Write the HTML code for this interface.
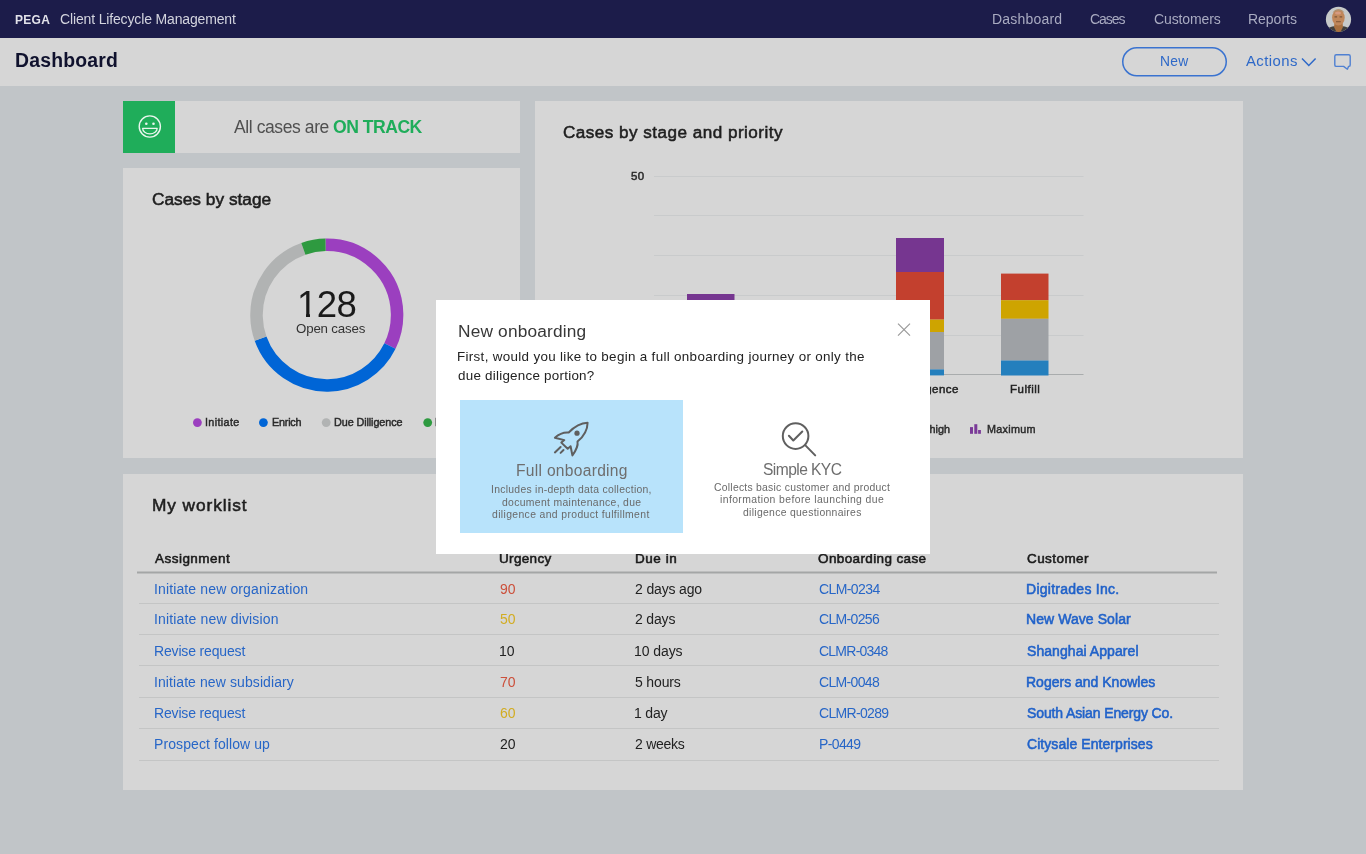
<!DOCTYPE html>
<html><head><meta charset="utf-8">
<style>
*{margin:0;padding:0;box-sizing:border-box}
html,body{width:1366px;height:854px;overflow:hidden;background:#c1c5c8;font-family:"Liberation Sans",sans-serif;position:relative}
.t{position:absolute;white-space:nowrap;will-change:transform}
.b{position:absolute}
svg{position:absolute;left:0;top:0}
</style></head><body>
<div class="b" style="left:0;top:0;width:1366px;height:38px;background:#1c1c4a"></div>
<div class="b" style="left:0;top:38px;width:1366px;height:48px;background:#d6d6d6"></div>
<div class="b" style="left:123px;top:101px;width:397px;height:52px;background:#d6d6d6"></div>
<div class="b" style="left:123px;top:101px;width:52px;height:52px;background:#1fad5a"></div>
<div class="b" style="left:123px;top:168px;width:397px;height:290px;background:#d6d6d6"></div>
<div class="b" style="left:535px;top:101px;width:708px;height:357px;background:#d6d6d6"></div>
<div class="b" style="left:123px;top:474px;width:1120px;height:316px;background:#d6d6d6"></div>

<svg width="1366" height="854" viewBox="0 0 1366 854">
  <!-- avatar -->
  <defs><clipPath id="av"><circle cx="1338.5" cy="19.4" r="12.6"/></clipPath></defs>
  <circle cx="1338.5" cy="19.4" r="12.6" fill="#c6c9c9"/>
  <g clip-path="url(#av)">
    <path d="M1326,34 L1328,28 Q1333,25.5 1338.5,26 Q1344,25.5 1349,28 L1351,34 Z" fill="#3f3f3d"/>
    <path d="M1334.5,23 L1342.5,23 L1343,27 L1340,33 L1337,33 L1334,27 Z" fill="#a8703f"/>
    <ellipse cx="1338.4" cy="17.6" rx="6.3" ry="8" fill="#c0875a"/>
    <ellipse cx="1338" cy="13" rx="3" ry="1.6" fill="#d59a80"/>
    <path d="M1332.5,13 Q1338.5,8.5 1344.5,13 Q1343,9.6 1338.5,9.3 Q1334,9.6 1332.5,13 Z" fill="#b09070"/>
    <rect x="1334.5" y="16.4" width="2.6" height="1" fill="#6a4a30"/>
    <rect x="1339.6" y="16.4" width="2.6" height="1" fill="#6a4a30"/>
    <rect x="1336" y="21.3" width="4.8" height="0.9" fill="#7a5030"/>
  </g>
  <!-- button New -->
  <rect x="1122.75" y="47.75" width="103.5" height="28" rx="14" ry="14" fill="none" stroke="#3a73d0" stroke-width="1.5"/>
  <!-- chevron -->
  <polyline points="1302,58.4 1308.8,65.4 1315.6,58.4" fill="none" stroke="#2d68c8" stroke-width="1.5"/>
  <!-- chat -->
  <path d="M1336.3,54.8 H1348.7 Q1350.2,54.8 1350.2,56.3 V64.9 Q1350.2,66.4 1348.7,66.4 H1348.5 L1347.4,69.2 L1343.6,66.4 H1336.3 Q1334.8,66.4 1334.8,64.9 V56.3 Q1334.8,54.8 1336.3,54.8 Z" fill="none" stroke="#4f80d2" stroke-width="1.4" stroke-linejoin="round"/>
  <!-- smiley -->
  <circle cx="149.8" cy="126.5" r="10.6" fill="none" stroke="#eaf6ee" stroke-width="1.4"/>
  <circle cx="146.3" cy="123.7" r="1.3" fill="#eaf6ee"/>
  <circle cx="153.5" cy="123.7" r="1.3" fill="#eaf6ee"/>
  <path d="M142.6,128.3 H157.2 A7.3,5.6 0 0 1 142.6,128.3 Z" fill="none" stroke="#eaf6ee" stroke-width="1.3" stroke-linejoin="round"/>
  <!-- donut -->
  <g transform="rotate(-91 326.8 315.1)" fill="none" stroke-width="12.5">
    <circle cx="326.8" cy="315.1" r="70.3" stroke="#9b3fbf" stroke-dasharray="143.5 500" stroke-dashoffset="0"/>
    <circle cx="326.8" cy="315.1" r="70.3" stroke="#0065d6" stroke-dasharray="164.4 500" stroke-dashoffset="-143.5"/>
    <circle cx="326.8" cy="315.1" r="70.3" stroke="#b1b3b3" stroke-dasharray="110.4 500" stroke-dashoffset="-307.9"/>
    <circle cx="326.8" cy="315.1" r="70.3" stroke="#2e9a40" stroke-dasharray="23.4 500" stroke-dashoffset="-418.3"/>
  </g>
  <!-- legend dots -->
  <circle cx="197.4" cy="422.6" r="4.4" fill="#9b3fbf"/>
  <circle cx="263.4" cy="422.6" r="4.4" fill="#0065d6"/>
  <circle cx="326.2" cy="422.6" r="4.4" fill="#b1b3b3"/>
  <circle cx="427.7" cy="422.6" r="4.4" fill="#2e9a40"/>
  <!-- grid -->
  <g fill="#c9cbcc">
    <rect x="654" y="176" width="429.5" height="1"/>
    <rect x="654" y="215" width="429.5" height="1"/>
    <rect x="654" y="255" width="429.5" height="1"/>
    <rect x="654" y="295" width="429.5" height="1"/>
    <rect x="654" y="335" width="429.5" height="1"/>
  </g>
  <rect x="654" y="374" width="429.5" height="1" fill="#a9acad"/>
  <!-- bars -->
  <rect x="687" y="294" width="47.5" height="81" fill="#763690"/>
  <rect x="896" y="238" width="48" height="34" fill="#763690"/>
  <rect x="896" y="272" width="48" height="47.6" fill="#c3402e"/>
  <rect x="896" y="319.6" width="48" height="12.4" fill="#cea400"/>
  <rect x="896" y="332" width="48" height="37.4" fill="#9ea1a5"/>
  <rect x="896" y="369.4" width="48" height="6" fill="#247fbd"/>
  <rect x="1001" y="273.6" width="47.5" height="26.6" fill="#c3402e"/>
  <rect x="1001" y="300.2" width="47.5" height="18.6" fill="#cea400"/>
  <rect x="1001" y="318.8" width="47.5" height="41.7" fill="#9ea1a5"/>
  <rect x="1001" y="360.5" width="47.5" height="15" fill="#247fbd"/>
  <!-- legend icon maximum -->
  <rect x="970" y="427.1" width="3" height="6.7" fill="#7a3a98"/>
  <rect x="974.3" y="424.2" width="3" height="9.6" fill="#7a3a98"/>
  <rect x="978.1" y="430" width="2.8" height="3.8" fill="#7a3a98"/>
  <!-- table lines -->
  <rect x="137" y="571.5" width="1080" height="2" fill="#a4a6a6"/>
  <g fill="#c4c5c5">
    <rect x="139" y="603" width="1080" height="1"/>
    <rect x="139" y="634" width="1080" height="1"/>
    <rect x="139" y="665" width="1080" height="1"/>
    <rect x="139" y="697" width="1080" height="1"/>
    <rect x="139" y="728" width="1080" height="1"/>
    <rect x="139" y="760" width="1080" height="1"/>
  </g>
</svg>
<div class="t" style="left:14.60px;top:14.00px;font-size:12px;line-height:12px;color:#e2e2ea;font-weight:bold;letter-spacing:0.286px;">PEGA</div>
<div class="t" style="left:59.80px;top:12.00px;font-size:14px;line-height:14px;color:#d3d4de;letter-spacing:-0.149px;">Client Lifecycle Management</div>
<div class="t" style="left:991.70px;top:12.00px;font-size:14px;line-height:14px;color:#a9abc1;letter-spacing:0.200px;">Dashboard</div>
<div class="t" style="left:1089.60px;top:12.00px;font-size:14px;line-height:14px;color:#a9abc1;letter-spacing:-1.021px;">Cases</div>
<div class="t" style="left:1153.80px;top:12.00px;font-size:14px;line-height:14px;color:#a9abc1;letter-spacing:-0.110px;">Customers</div>
<div class="t" style="left:1248.40px;top:12.00px;font-size:14px;line-height:14px;color:#a9abc1;letter-spacing:-0.020px;">Reports</div>
<div class="t" style="left:15.10px;top:51.00px;font-size:19.4px;line-height:19.4px;color:#10122e;font-weight:bold;letter-spacing:0.196px;">Dashboard</div>
<div class="t" style="left:1160.00px;top:55.00px;font-size:13.8px;line-height:13.8px;color:#2d68c8;letter-spacing:0.332px;">New</div>
<div class="t" style="left:1245.90px;top:54.00px;font-size:14.9px;line-height:14.9px;color:#2d68c8;letter-spacing:0.419px;">Actions</div>
<div class="t" style="left:234.20px;top:119.00px;font-size:17.5px;line-height:17.5px;color:#505050;letter-spacing:-0.404px;">All cases are</div>
<div class="t" style="left:333.20px;top:119.00px;font-size:17.6px;line-height:17.6px;color:#1fad5a;font-weight:bold;letter-spacing:-0.506px;">ON TRACK</div>
<div class="t" style="left:151.50px;top:191.00px;font-size:17.3px;line-height:17.3px;color:#1e1e1e;-webkit-text-stroke:0.55px #1e1e1e;letter-spacing:0.008px;">Cases by stage</div>
<div class="t" style="left:563.40px;top:124.00px;font-size:17.1px;line-height:17.1px;color:#1e1e1e;-webkit-text-stroke:0.55px #1e1e1e;letter-spacing:0.478px;">Cases by stage and priority</div>
<div class="t" style="left:152.25px;top:497.00px;font-size:17.3px;line-height:17.3px;color:#1e1e1e;-webkit-text-stroke:0.55px #1e1e1e;letter-spacing:0.911px;">My worklist</div>
<div class="t" style="left:296.90px;top:287.00px;font-size:36.6px;line-height:36.6px;color:#1a1a1a;letter-spacing:-0.543px;">128</div>
<div class="t" style="left:296.20px;top:322.00px;font-size:13.3px;line-height:13.3px;color:#333333;letter-spacing:-0.179px;">Open cases</div>
<div class="t" style="left:204.60px;top:417.00px;font-size:10.8px;line-height:10.8px;color:#2a2a2a;-webkit-text-stroke:0.45px #2a2a2a;letter-spacing:0.356px;">Initiate</div>
<div class="t" style="left:271.60px;top:417.00px;font-size:10.8px;line-height:10.8px;color:#2a2a2a;-webkit-text-stroke:0.45px #2a2a2a;letter-spacing:-0.220px;">Enrich</div>
<div class="t" style="left:334.00px;top:417.00px;font-size:10.8px;line-height:10.8px;color:#2a2a2a;-webkit-text-stroke:0.45px #2a2a2a;letter-spacing:-0.085px;">Due Dilligence</div>
<div class="t" style="left:434.60px;top:417.00px;font-size:10.8px;line-height:10.8px;color:#2a2a2a;-webkit-text-stroke:0.45px #2a2a2a;">Fulfill</div>
<div class="t" style="left:630.90px;top:171.00px;font-size:11.5px;line-height:11.5px;color:#2a2a2a;-webkit-text-stroke:0.48px #2a2a2a;letter-spacing:0.404px;">50</div>
<div class="t" style="left:1010.10px;top:384.00px;font-size:11.5px;line-height:11.5px;color:#222222;-webkit-text-stroke:0.48px #222222;letter-spacing:0.503px;">Fulfill</div>
<div class="t" style="left:881.00px;top:384.00px;font-size:11.5px;line-height:11.5px;color:#222222;-webkit-text-stroke:0.48px #222222;letter-spacing:0.483px;">Due Diligence</div>
<div class="t" style="left:986.70px;top:424.00px;font-size:10.8px;line-height:10.8px;color:#2a2a2a;-webkit-text-stroke:0.45px #2a2a2a;letter-spacing:0.301px;">Maximum</div>
<div class="t" style="left:904.90px;top:424.00px;font-size:10.8px;line-height:10.8px;color:#2a2a2a;-webkit-text-stroke:0.45px #2a2a2a;">Very high</div>
<div class="t" style="left:458.00px;top:323.00px;font-size:17.3px;line-height:17.3px;color:#383838;letter-spacing:0.181px;z-index:10;">New onboarding</div>
<div class="t" style="left:457.40px;top:350.00px;font-size:13.4px;line-height:13.4px;color:#222222;letter-spacing:0.326px;z-index:10;">First, would you like to begin a full onboarding journey or only the</div>
<div class="t" style="left:458.40px;top:369.00px;font-size:13.4px;line-height:13.4px;color:#222222;letter-spacing:0.248px;z-index:10;">due diligence portion?</div>
<div class="t" style="left:515.60px;top:463.00px;font-size:15.6px;line-height:15.6px;color:#6e6e6e;letter-spacing:0.284px;z-index:10;">Full onboarding</div>
<div class="t" style="left:491.40px;top:485.00px;font-size:10.4px;line-height:10.4px;color:#6a6a6a;letter-spacing:0.277px;z-index:10;">Includes in-depth data collection,</div>
<div class="t" style="left:501.70px;top:498.00px;font-size:10.4px;line-height:10.4px;color:#6a6a6a;letter-spacing:0.331px;z-index:10;">document maintenance, due</div>
<div class="t" style="left:492.40px;top:510.00px;font-size:10.4px;line-height:10.4px;color:#6a6a6a;letter-spacing:0.367px;z-index:10;">diligence and product fulfillment</div>
<div class="t" style="left:762.60px;top:462.00px;font-size:15.6px;line-height:15.6px;color:#6e6e6e;letter-spacing:-0.567px;z-index:10;">Simple KYC</div>
<div class="t" style="left:713.90px;top:483.00px;font-size:10.4px;line-height:10.4px;color:#6a6a6a;letter-spacing:0.247px;z-index:10;">Collects basic customer and product</div>
<div class="t" style="left:719.80px;top:495.00px;font-size:10.4px;line-height:10.4px;color:#6a6a6a;letter-spacing:0.398px;z-index:10;">information before launching due</div>
<div class="t" style="left:742.80px;top:508.00px;font-size:10.4px;line-height:10.4px;color:#6a6a6a;letter-spacing:0.300px;z-index:10;">diligence questionnaires</div>
<div class="t" style="left:154.60px;top:552.00px;font-size:13.5px;line-height:13.5px;color:#1a1a1a;-webkit-text-stroke:0.55px #1a1a1a;letter-spacing:0.469px;">Assignment</div>
<div class="t" style="left:499.00px;top:552.00px;font-size:13.5px;line-height:13.5px;color:#1a1a1a;-webkit-text-stroke:0.55px #1a1a1a;letter-spacing:0.330px;">Urgency</div>
<div class="t" style="left:634.70px;top:552.00px;font-size:13.5px;line-height:13.5px;color:#1a1a1a;-webkit-text-stroke:0.55px #1a1a1a;letter-spacing:0.557px;">Due in</div>
<div class="t" style="left:818.30px;top:552.00px;font-size:13.5px;line-height:13.5px;color:#1a1a1a;-webkit-text-stroke:0.55px #1a1a1a;letter-spacing:0.378px;">Onboarding case</div>
<div class="t" style="left:1026.60px;top:552.00px;font-size:13.5px;line-height:13.5px;color:#1a1a1a;-webkit-text-stroke:0.55px #1a1a1a;letter-spacing:0.426px;">Customer</div>
<div class="t" style="left:153.60px;top:582.00px;font-size:14px;line-height:14px;color:#2766c7;letter-spacing:0.129px;">Initiate new organization</div>
<div class="t" style="left:500.00px;top:582.00px;font-size:14px;line-height:14px;color:#cc4f3a;">90</div>
<div class="t" style="left:635.40px;top:582.00px;font-size:14px;line-height:14px;color:#222222;letter-spacing:-0.150px;">2 days ago</div>
<div class="t" style="left:819.40px;top:582.00px;font-size:14px;line-height:14px;color:#2766c7;letter-spacing:-0.597px;">CLM-0234</div>
<div class="t" style="left:1025.60px;top:582.00px;font-size:14px;line-height:14px;color:#2162c9;-webkit-text-stroke:0.55px #2162c9;letter-spacing:0.265px;">Digitrades Inc.</div>
<div class="t" style="left:153.60px;top:612.00px;font-size:14px;line-height:14px;color:#2766c7;letter-spacing:0.154px;">Initiate new division</div>
<div class="t" style="left:500.00px;top:612.00px;font-size:14px;line-height:14px;color:#d2ac22;">50</div>
<div class="t" style="left:635.40px;top:612.00px;font-size:14px;line-height:14px;color:#222222;letter-spacing:-0.162px;">2 days</div>
<div class="t" style="left:819.40px;top:612.00px;font-size:14px;line-height:14px;color:#2766c7;letter-spacing:-0.666px;">CLM-0256</div>
<div class="t" style="left:1025.60px;top:612.00px;font-size:14px;line-height:14px;color:#2162c9;-webkit-text-stroke:0.55px #2162c9;letter-spacing:0.070px;">New Wave Solar</div>
<div class="t" style="left:153.60px;top:644.00px;font-size:14px;line-height:14px;color:#2766c7;letter-spacing:-0.161px;">Revise request</div>
<div class="t" style="left:499.00px;top:644.00px;font-size:14px;line-height:14px;color:#222222;">10</div>
<div class="t" style="left:634.40px;top:644.00px;font-size:14px;line-height:14px;color:#222222;letter-spacing:-0.072px;">10 days</div>
<div class="t" style="left:819.40px;top:644.00px;font-size:14px;line-height:14px;color:#2766c7;letter-spacing:-0.761px;">CLMR-0348</div>
<div class="t" style="left:1026.60px;top:644.00px;font-size:14px;line-height:14px;color:#2162c9;-webkit-text-stroke:0.55px #2162c9;letter-spacing:0.065px;">Shanghai Apparel</div>
<div class="t" style="left:153.60px;top:675.00px;font-size:14px;line-height:14px;color:#2766c7;letter-spacing:0.094px;">Initiate new subsidiary</div>
<div class="t" style="left:500.00px;top:675.00px;font-size:14px;line-height:14px;color:#cc4f3a;">70</div>
<div class="t" style="left:635.40px;top:675.00px;font-size:14px;line-height:14px;color:#222222;letter-spacing:-0.153px;">5 hours</div>
<div class="t" style="left:819.40px;top:675.00px;font-size:14px;line-height:14px;color:#2766c7;letter-spacing:-0.666px;">CLM-0048</div>
<div class="t" style="left:1025.60px;top:675.00px;font-size:14px;line-height:14px;color:#2162c9;-webkit-text-stroke:0.55px #2162c9;">Rogers and Knowles</div>
<div class="t" style="left:153.60px;top:706.00px;font-size:14px;line-height:14px;color:#2766c7;letter-spacing:-0.161px;">Revise request</div>
<div class="t" style="left:500.00px;top:706.00px;font-size:14px;line-height:14px;color:#d2ac22;">60</div>
<div class="t" style="left:634.40px;top:706.00px;font-size:14px;line-height:14px;color:#222222;letter-spacing:-0.164px;">1 day</div>
<div class="t" style="left:819.40px;top:706.00px;font-size:14px;line-height:14px;color:#2766c7;letter-spacing:-0.672px;">CLMR-0289</div>
<div class="t" style="left:1026.60px;top:706.00px;font-size:14px;line-height:14px;color:#2162c9;-webkit-text-stroke:0.55px #2162c9;letter-spacing:-0.120px;">South Asian Energy Co.</div>
<div class="t" style="left:153.60px;top:737.00px;font-size:14px;line-height:14px;color:#2766c7;letter-spacing:0.088px;">Prospect follow up</div>
<div class="t" style="left:500.00px;top:737.00px;font-size:14px;line-height:14px;color:#222222;">20</div>
<div class="t" style="left:635.40px;top:737.00px;font-size:14px;line-height:14px;color:#222222;letter-spacing:-0.260px;">2 weeks</div>
<div class="t" style="left:819.00px;top:737.00px;font-size:14px;line-height:14px;color:#2766c7;letter-spacing:-0.612px;">P-0449</div>
<div class="t" style="left:1026.60px;top:737.00px;font-size:14px;line-height:14px;color:#2162c9;-webkit-text-stroke:0.55px #2162c9;letter-spacing:0.064px;">Citysale Enterprises</div>
<div class="b" style="left:299px;top:313px;width:7px;height:5px;background:#d6d6d6"></div>
<div class="b" style="left:310px;top:313px;width:7px;height:5px;background:#d6d6d6"></div>
<div class="b" id="modal" style="z-index:3;left:436px;top:300px;width:494px;height:254px;background:#fff"></div>
<div class="b" style="left:460px;top:400px;width:223px;height:133px;background:#b8e3fb;z-index:4"></div>
<svg width="1366" height="854" viewBox="0 0 1366 854" style="z-index:5">
  <!-- close -->
  <path d="M898,323.6 L910,335.7 M910,323.6 L898,335.7" stroke="#9a9a9a" stroke-width="1.2" fill="none"/>
  <!-- rocket -->
  <g transform="translate(550 418)" fill="none" stroke="#5f5f5f" stroke-width="2" stroke-linejoin="round" stroke-linecap="round">
    <path d="M37.6,4.7 C37.5,12 33,19 27.5,23.6 C28,26 27,31 22.4,37.4 L20.6,28.3 L17.7,30.7 L11.3,24.6 L14.3,22.1 L4.9,19.7 C9,16 14,14 18.7,14.5 C23,10 29,5 37.6,4.7 Z"/>
    <path d="M4.9,34.4 L10.6,29 M10.6,34.9 L13.5,32"/>
    <circle cx="27" cy="15.2" r="2.6" fill="#5f5f5f" stroke="none"/>
  </g>
  <!-- magnifier -->
  <g transform="translate(776 416)" fill="none" stroke="#5f5f5f" stroke-width="2" stroke-linecap="round" stroke-linejoin="round">
    <circle cx="19.6" cy="20.1" r="12.8"/>
    <path d="M29.4,29.4 L39.2,39.4"/>
    <path d="M12.9,19.8 L17.3,24.5 L26.3,15.5"/>
  </g>
</svg>
</body></html>
